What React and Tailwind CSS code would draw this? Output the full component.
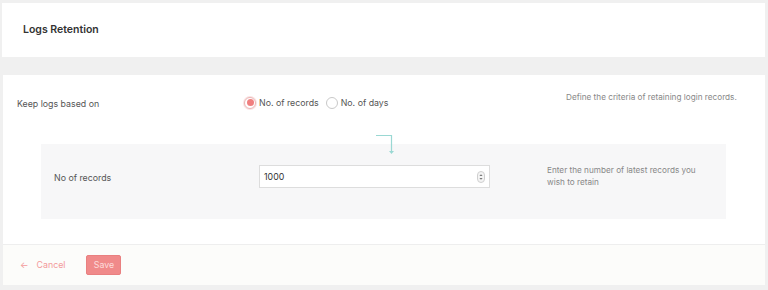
import React from 'react'

function Radio({ checked, label }) {
    return (
        <label className="flex items-center gap-[3px]">
            <span className={`w-[12px] h-[12px] rounded-full border flex items-center justify-center bg-white ${checked ? 'border-[#e9b7b7] shadow-[0_0_0_1px_#fbe3e3]' : 'border-[#c9c9c9]'}`}>
                {checked && <span className="w-[7px] h-[7px] rounded-full bg-[#f07f7f]"/>}
            </span>
            <span className="text-[8.8px] text-[#555]">{label}</span>
        </label>
    )
}

export default function App() {
    return (
        <div className="w-[768px] h-[290px] bg-[#f0f0f0] pt-[3px] pl-[2px] pr-[3px] overflow-hidden"
            style={{ fontFamily: 'Inter, "Noto Sans", sans-serif' }}>

            {/* Header */}
            <div className="h-[54px] bg-white flex items-center pl-[21px]">
                <h1 className="text-[10.5px] font-semibold text-[#333]">Logs Retention</h1>
            </div>

            {/* Settings card */}
            <div className="relative mt-[18px] ml-[1px] h-[210px] bg-white flex flex-col">
                <div className="h-[69px] flex items-start pl-[14px] pt-[21px]">
                    <div className="w-[227px] text-[8.8px] text-[#555] pt-[1px]">Keep logs based on</div>
                    <div className="w-[322px] flex items-center gap-[7px]">
                        <Radio checked label="No. of records"/>
                        <Radio label="No. of days"/>
                    </div>
                    <div className="text-[8.2px] text-[#888] -mt-[5px]">Define the criteria of retaining login records.</div>
                </div>

                {/* connector arrow */}
                <svg className="absolute left-[367px] top-[58px]" width="24" height="24" viewBox="0 0 24 24" fill="none">
                    <path d="M6 2.5H21.5V19" stroke="#9ad8d3" strokeWidth="1.2"/>
                    <path d="M19 18L21.5 21L24 18Z" fill="#9ad8d3"/>
                </svg>

                <div className="ml-[38px] mr-[39px] h-[75px] bg-[#f7f7f8] flex items-start pt-[21px] pl-[13px]">
                    <div className="w-[205px] text-[8.8px] text-[#555] mt-[6px]">No of records</div>
                    <div className="w-[231px] h-[23px] bg-white border border-[#ddd] flex items-center justify-between pl-[4px] pr-[4px]">
                        <span className="text-[8.8px] text-[#333]">1000</span>
                        <svg width="8" height="12" viewBox="0 0 8 12">
                            <rect x="0.5" y="0.5" width="7" height="11" rx="3.5" fill="#f4f4f4" stroke="#cfcfcf"/>
                            <path d="M2.4 5L4 3.2L5.6 5Z" fill="#777"/>
                            <path d="M2.4 7L4 8.8L5.6 7Z" fill="#777"/>
                        </svg>
                    </div>
                    <div className="ml-[57px] w-[165px] text-[8.2px] leading-[12px] text-[#888] -mt-[1px]">
                        Enter the number of latest records you wish to retain
                    </div>
                </div>

                <div className="mt-auto h-[41px] border-t border-[#eee] bg-[#fcfcfa] flex items-center pl-[17px]">
                    <button className="flex items-center gap-[8px] text-[8.8px] text-[#f39a9a]">
                        <span className="text-[9px]">←</span>
                        <span>Cancel</span>
                    </button>
                    <button className="ml-[21px] w-[35px] h-[20px] rounded-[2px] bg-[#f08a8a] border border-[#e98080] text-[8.8px] text-[#fddcdc]">
                        Save
                    </button>
                </div>
            </div>
        </div>
    )
}
